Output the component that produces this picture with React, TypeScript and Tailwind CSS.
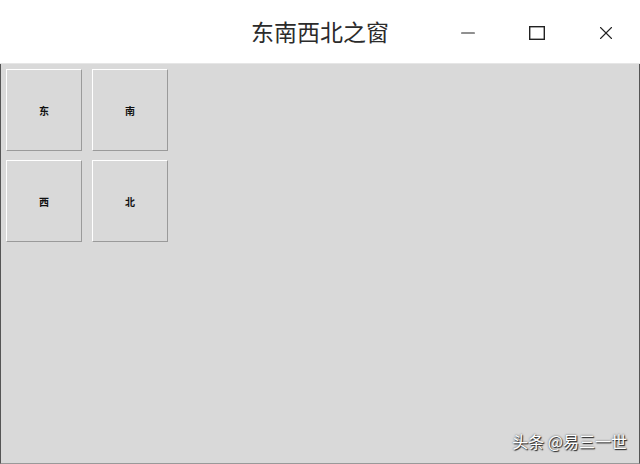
import { Minus, X } from 'lucide-react';

const cells = ['东', '南', '西', '北'];

export default function App() {
  return (
    <div
      className="w-[640px] h-[464px] flex flex-col bg-[#d9d9d9] overflow-hidden relative"
      style={{ fontFamily: '"Noto Sans", "Noto Sans CJK SC", sans-serif' }}
    >
      {/* title bar */}
      <div className="h-[64px] bg-white flex items-center relative border-b border-[#e6e6e6]">
        <div className="flex-1 text-center text-[23px] text-[#2b2b2b] pt-[2px]">东南西北之窗</div>
        <div className="absolute right-0 top-0 h-full flex items-center text-[#222] pt-[2px]">
          <div className="w-[69px] flex justify-center"><Minus size={22} strokeWidth={1.2} /></div>
          <div className="w-[69px] flex justify-center">
            <svg width="16" height="14" viewBox="0 0 16 14" fill="none" stroke="currentColor" strokeWidth="1.4">
              <rect x="0.7" y="0.7" width="14.6" height="12.6" />
            </svg>
          </div>
          <div className="w-[69px] flex justify-center"><X size={22} strokeWidth={1.2} /></div>
        </div>
      </div>

      {/* body */}
      <div className="flex-1 flex border-l border-r border-[#555] border-b border-b-[#999]">
        <div className="grid grid-cols-[76px_76px] grid-rows-[82px_82px] gap-x-[10px] gap-y-[9px] pl-[5px] pt-[5px]">
          {cells.map((c) => (
            <div
              key={c}
              className="flex items-center justify-center border border-t-white border-l-white border-r-[#9a9a9a] border-b-[#9a9a9a] bg-[#d9d9d9] text-[10px] font-bold text-[#111]"
              style={{ fontFamily: '"Noto Sans CJK SC", sans-serif' }}
            >
              {c}
            </div>
          ))}
        </div>
      </div>

      <div
        className="absolute right-[13px] bottom-[11px] text-[16px] text-white"
        style={{ textShadow: '1px 1px 1px #222, 0 0 2px #444', fontFamily: '"Noto Sans CJK SC", sans-serif' }}
      >
        头条 @易三一世
      </div>
    </div>
  );
}
